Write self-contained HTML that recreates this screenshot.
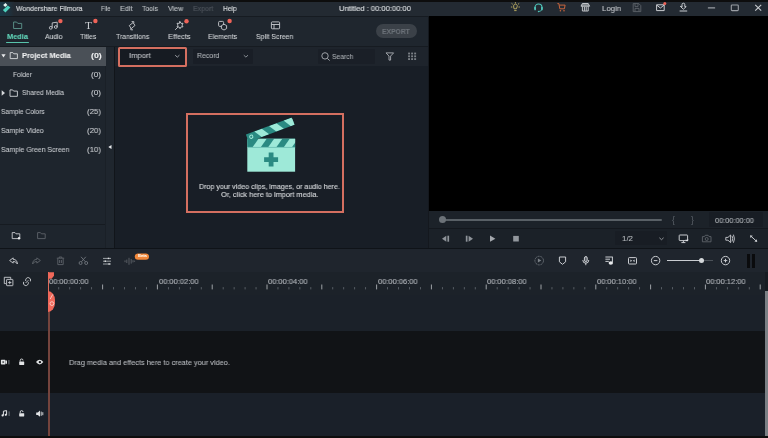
<!DOCTYPE html>
<html lang="en"><head><meta charset="utf-8"><title>Wondershare Filmora</title>
<style>
html,body{margin:0;padding:0;background:#0d0d0d;}
body{width:768px;height:438px;position:relative;overflow:hidden;font-family:"Liberation Sans",sans-serif;}
.b{position:absolute;}
.t{position:absolute;white-space:nowrap;line-height:1;will-change:transform;transform-origin:0 50%;-webkit-text-stroke:0.08px currentColor;}
svg{position:absolute;left:0;top:0;overflow:visible;}
</style></head><body>
<div class="b" style="left:0px;top:1.8px;width:768px;height:14.7px;background:#232a32;"></div>
<div class="b" style="left:0px;top:16.2px;width:768px;height:1px;background:#161b21;"></div>
<div class="b" style="left:0px;top:17px;width:429px;height:29.5px;background:#1f262e;"></div>
<div class="b" style="left:0px;top:46.2px;width:429px;height:1px;background:#161b21;"></div>
<div class="b" style="left:0px;top:47px;width:114.5px;height:201px;background:#1e252d;"></div>
<div class="b" style="left:0px;top:47px;width:105.5px;height:18.7px;background:#4a5057;"></div>
<div class="b" style="left:105.5px;top:47px;width:8.6px;height:201px;background:#1f262e;"></div>
<div class="b" style="left:113.9px;top:47px;width:1.4px;height:201px;background:#11151a;"></div>
<div class="b" style="left:0px;top:223.6px;width:105.5px;height:0.9px;background:#161b21;"></div>
<div class="b" style="left:105.3px;top:65.7px;width:0.8px;height:182px;background:#1a2027;"></div>
<div class="b" style="left:115px;top:47px;width:314px;height:18.5px;background:#1e242c;"></div>
<div class="b" style="left:115px;top:65.5px;width:314px;height:182.3px;background:#181e26;"></div>
<div class="b" style="left:427.8px;top:17px;width:1.4px;height:231px;background:#14181e;"></div>
<div class="b" style="left:118.4px;top:46.9px;width:68.4px;height:19.7px;background:#161b22;box-sizing:border-box;border:2.1px solid #d46f60;border-radius:1.5px;"></div>
<div class="b" style="left:192.5px;top:49px;width:60.5px;height:14.6px;background:#191e26;border-radius:1px;"></div>
<div class="b" style="left:318px;top:49.2px;width:56.5px;height:14.6px;background:#1a1f27;border-radius:1px;"></div>
<div class="b" style="left:375.8px;top:23.8px;width:41.4px;height:13.8px;background:#3b4148;border-radius:7px;"></div>
<div class="b" style="left:429px;top:16.4px;width:339px;height:194.3px;background:#000000;"></div>
<div class="b" style="left:429px;top:210.7px;width:339px;height:17.3px;background:#1c2229;"></div>
<div class="b" style="left:429px;top:228px;width:339px;height:0.8px;background:#14181e;"></div>
<div class="b" style="left:429px;top:228.8px;width:339px;height:19px;background:#1b2128;"></div>
<div class="b" style="left:0px;top:247.5px;width:768px;height:1.6px;background:#0f1318;"></div>
<div class="b" style="left:443px;top:219.1px;width:218.5px;height:1.7px;background:#596066;border-radius:1px;"></div>
<div class="b" style="left:438.5px;top:216.4px;width:7px;height:7px;background:#6c7278;border-radius:50%;"></div>
<div class="b" style="left:709px;top:212px;width:53.5px;height:15px;background:#181d24;border-radius:1px;"></div>
<div class="b" style="left:615px;top:231.4px;width:52px;height:13.2px;background:#181d24;border-radius:1px;"></div>
<div class="b" style="left:0px;top:249px;width:768px;height:23px;background:#1f252d;"></div>
<div class="b" style="left:0px;top:272px;width:768px;height:23px;background:#1c2229;"></div>
<div class="b" style="left:0px;top:295px;width:768px;height:36px;background:#1b2129;"></div>
<div class="b" style="left:0px;top:331px;width:768px;height:62px;background:#111316;"></div>
<div class="b" style="left:0px;top:393px;width:768px;height:43px;background:#1a2029;"></div>
<div class="b" style="left:0px;top:436px;width:768px;height:2px;background:#0d0d0d;"></div>
<div class="b" style="left:764.6px;top:272px;width:3.4px;height:19px;background:#171c22;"></div>
<div class="b" style="left:764.8px;top:291px;width:3.2px;height:145px;background:#7b8085;"></div>
<div class="b" style="left:747.2px;top:253.8px;width:3.2px;height:13.8px;background:#0a0b0d;"></div>
<div class="b" style="left:751.6px;top:253.8px;width:3.2px;height:13.8px;background:#0a0b0d;"></div>
<div class="b" style="left:667px;top:260.2px;width:35px;height:1.2px;background:#c9ccd0;"></div>
<div class="b" style="left:702px;top:260.4px;width:11px;height:0.8px;background:#4c5259;"></div>
<div class="b" style="left:699px;top:258.2px;width:5px;height:5px;background:#d5d8db;border-radius:50%;"></div>
<div class="b" style="left:185.9px;top:112.8px;width:158.4px;height:100.1px;background:transparent;box-sizing:border-box;border:2.1px solid #d46f60;"></div>
<div class="b" style="left:48.2px;top:295px;width:1.4px;height:141px;background:#75443d;"></div>
<div class="b" style="left:48.2px;top:272px;width:1.2px;height:23px;background:#e06c5c;"></div>
<div class="b" style="left:48.2px;top:272.2px;width:5.8px;height:6.6px;background:#f0685a;clip-path:polygon(0 0,100% 0,100% 55%,60% 100%,0 100%);"></div>
<div class="b" style="left:48.2px;top:291px;width:7px;height:21px;background:#f0685a;border-radius:0 7px 7px 0 / 0 9px 9px 0;"></div>
<div class="b" style="left:6.3px;top:42.1px;width:22.3px;height:1.4px;background:#58c4ab;border-radius:1px;"></div>
<svg width="768" height="438" viewBox="0 0 768 438">
<rect x="58.36" y="287.1" width="0.8" height="2.3" fill="#666c73"/>
<rect x="69.32" y="287.1" width="0.8" height="2.3" fill="#666c73"/>
<rect x="80.28" y="287.1" width="0.8" height="2.3" fill="#666c73"/>
<rect x="91.24" y="287.1" width="0.8" height="2.3" fill="#666c73"/>
<rect x="102.10" y="284.5" width="1" height="4.9" fill="#9da1a6"/>
<rect x="113.16" y="287.1" width="0.8" height="2.3" fill="#666c73"/>
<rect x="124.12" y="287.1" width="0.8" height="2.3" fill="#666c73"/>
<rect x="135.08" y="287.1" width="0.8" height="2.3" fill="#666c73"/>
<rect x="146.04" y="287.1" width="0.8" height="2.3" fill="#666c73"/>
<rect x="156.90" y="284.5" width="1" height="4.9" fill="#9da1a6"/>
<rect x="167.96" y="287.1" width="0.8" height="2.3" fill="#666c73"/>
<rect x="178.92" y="287.1" width="0.8" height="2.3" fill="#666c73"/>
<rect x="189.88" y="287.1" width="0.8" height="2.3" fill="#666c73"/>
<rect x="200.84" y="287.1" width="0.8" height="2.3" fill="#666c73"/>
<rect x="211.70" y="284.5" width="1" height="4.9" fill="#9da1a6"/>
<rect x="222.76" y="287.1" width="0.8" height="2.3" fill="#666c73"/>
<rect x="233.72" y="287.1" width="0.8" height="2.3" fill="#666c73"/>
<rect x="244.68" y="287.1" width="0.8" height="2.3" fill="#666c73"/>
<rect x="255.64" y="287.1" width="0.8" height="2.3" fill="#666c73"/>
<rect x="266.50" y="284.5" width="1" height="4.9" fill="#9da1a6"/>
<rect x="277.56" y="287.1" width="0.8" height="2.3" fill="#666c73"/>
<rect x="288.52" y="287.1" width="0.8" height="2.3" fill="#666c73"/>
<rect x="299.48" y="287.1" width="0.8" height="2.3" fill="#666c73"/>
<rect x="310.44" y="287.1" width="0.8" height="2.3" fill="#666c73"/>
<rect x="321.30" y="284.5" width="1" height="4.9" fill="#9da1a6"/>
<rect x="332.36" y="287.1" width="0.8" height="2.3" fill="#666c73"/>
<rect x="343.32" y="287.1" width="0.8" height="2.3" fill="#666c73"/>
<rect x="354.28" y="287.1" width="0.8" height="2.3" fill="#666c73"/>
<rect x="365.24" y="287.1" width="0.8" height="2.3" fill="#666c73"/>
<rect x="376.10" y="284.5" width="1" height="4.9" fill="#9da1a6"/>
<rect x="387.16" y="287.1" width="0.8" height="2.3" fill="#666c73"/>
<rect x="398.12" y="287.1" width="0.8" height="2.3" fill="#666c73"/>
<rect x="409.08" y="287.1" width="0.8" height="2.3" fill="#666c73"/>
<rect x="420.04" y="287.1" width="0.8" height="2.3" fill="#666c73"/>
<rect x="430.90" y="284.5" width="1" height="4.9" fill="#9da1a6"/>
<rect x="441.96" y="287.1" width="0.8" height="2.3" fill="#666c73"/>
<rect x="452.92" y="287.1" width="0.8" height="2.3" fill="#666c73"/>
<rect x="463.88" y="287.1" width="0.8" height="2.3" fill="#666c73"/>
<rect x="474.84" y="287.1" width="0.8" height="2.3" fill="#666c73"/>
<rect x="485.70" y="284.5" width="1" height="4.9" fill="#9da1a6"/>
<rect x="496.76" y="287.1" width="0.8" height="2.3" fill="#666c73"/>
<rect x="507.72" y="287.1" width="0.8" height="2.3" fill="#666c73"/>
<rect x="518.68" y="287.1" width="0.8" height="2.3" fill="#666c73"/>
<rect x="529.64" y="287.1" width="0.8" height="2.3" fill="#666c73"/>
<rect x="540.50" y="284.5" width="1" height="4.9" fill="#9da1a6"/>
<rect x="551.56" y="287.1" width="0.8" height="2.3" fill="#666c73"/>
<rect x="562.52" y="287.1" width="0.8" height="2.3" fill="#666c73"/>
<rect x="573.48" y="287.1" width="0.8" height="2.3" fill="#666c73"/>
<rect x="584.44" y="287.1" width="0.8" height="2.3" fill="#666c73"/>
<rect x="595.30" y="284.5" width="1" height="4.9" fill="#9da1a6"/>
<rect x="606.36" y="287.1" width="0.8" height="2.3" fill="#666c73"/>
<rect x="617.32" y="287.1" width="0.8" height="2.3" fill="#666c73"/>
<rect x="628.28" y="287.1" width="0.8" height="2.3" fill="#666c73"/>
<rect x="639.24" y="287.1" width="0.8" height="2.3" fill="#666c73"/>
<rect x="650.10" y="284.5" width="1" height="4.9" fill="#9da1a6"/>
<rect x="661.16" y="287.1" width="0.8" height="2.3" fill="#666c73"/>
<rect x="672.12" y="287.1" width="0.8" height="2.3" fill="#666c73"/>
<rect x="683.08" y="287.1" width="0.8" height="2.3" fill="#666c73"/>
<rect x="694.04" y="287.1" width="0.8" height="2.3" fill="#666c73"/>
<rect x="704.90" y="284.5" width="1" height="4.9" fill="#9da1a6"/>
<rect x="715.96" y="287.1" width="0.8" height="2.3" fill="#666c73"/>
<rect x="726.92" y="287.1" width="0.8" height="2.3" fill="#666c73"/>
<rect x="737.88" y="287.1" width="0.8" height="2.3" fill="#666c73"/>
<rect x="748.84" y="287.1" width="0.8" height="2.3" fill="#666c73"/>
<rect x="759.70" y="284.5" width="1" height="4.9" fill="#9da1a6"/>
<defs><linearGradient id="lg" x1="0" y1="0" x2="1" y2="0"><stop offset="0" stop-color="#1c3846"/><stop offset="0.65" stop-color="#1f323e"/><stop offset="1" stop-color="#232a32"/></linearGradient></defs>
<rect x="0" y="1.8" width="14" height="14.2" fill="url(#lg)"/>
<polygon points="3.2,4.9 5.5,2.9 7.4,5 5.2,7" fill="#e4f3f1"/>
<polygon points="7.8,5.5 10.4,7.6 5.4,12.4 2.9,10" fill="#4fd2bf"/>
<path d="M13.6 22 h3 l1.2 1.4 h3.9 v5.1 h-8.1z" fill="none" stroke="#578a83" stroke-width="1" stroke-linejoin="round"/>
<g fill="none" stroke="#c9ccd0" stroke-width="0.9"><circle cx="50.8" cy="27.8" r="1.4"/><circle cx="55.8" cy="27" r="1.4"/><path d="M52.2 27.8 V22.9 L57.2 22.2 V27"/></g>
<g fill="none" stroke="#c9ccd0" stroke-width="0.9" stroke-linejoin="round"><path d="M129.3 25.6 L133 22.6 L135 25.4 L131.3 28.6 Z"/><path d="M131.6 21.6 h2.2 v1.6"/><path d="M133 29.8 h-2.2 v-1.6"/></g>
<g fill="none" stroke="#c9ccd0" stroke-width="0.9" stroke-linejoin="round" stroke-linecap="round"><path d="M180 21.6 l1 1.8 l2 -0.1 l-1 1.8 l1 1.8 l-2 0 l-1 1.8 l-1 -1.8 l-2 0 l1 -1.8 l-1 -1.8 l2 0.1 z"/><path d="M177.6 27.4 L175.4 29.6"/></g>
<g fill="none" stroke="#c9ccd0" stroke-width="0.9" stroke-linejoin="round"><rect x="218.6" y="21.4" width="5" height="5" rx="1"/><path d="M224 24.2 l2.6 1.4 v3 l-2.6 1.4 l-2.6 -1.4 v-3 z" fill="#1f262e"/></g>
<g fill="none" stroke="#c9ccd0" stroke-width="0.9"><rect x="271.4" y="21.9" width="8.2" height="6.9" rx="0.8"/><path d="M271.4 24.5 h8.2 M274 24.5 v4.3"/></g>
<circle cx="60.4" cy="21.1" r="2.2" fill="#ef6358"/>
<circle cx="95.4" cy="21.0" r="2.2" fill="#ef6358"/>
<circle cx="186.5" cy="21.3" r="2.2" fill="#ef6358"/>
<circle cx="229.6" cy="21.0" r="2.2" fill="#ef6358"/>
<g fill="none" stroke="#c2b162" stroke-width="0.9" stroke-linecap="round"><path d="M513.6 6.6 a1.9 1.9 0 1 1 3.6 0 l-0.8 2.2 h-2 z"/><path d="M514.6 10.6 h1.6 M515.4 3 v-0.5 M512.4 4 l-0.5 -0.4 M518.4 4 l0.5 -0.4 M511.9 7 h-0.6 M518.9 7 h0.6"/></g>
<g fill="none" stroke="#4fc6ba" stroke-linecap="round"><path d="M535 8.4 v-0.9 a3.5 3.5 0 0 1 7 0 v0.9" stroke-width="1.1"/><path d="M535.1 7.6 v1.9 M541.9 7.6 v1.9" stroke-width="1.7"/><path d="M541.8 9.8 q-0.3 1.6 -2.8 1.7" stroke-width="0.8"/></g><circle cx="538.6" cy="11.5" r="0.8" fill="#4fc6ba"/>
<g fill="none" stroke="#c8643c" stroke-width="1" stroke-linejoin="round"><path d="M557.4 3.6 h1.5 l0.9 5.2 h4.6 l0.7 -3.7 h-5.7"/></g><circle cx="560.4" cy="10.7" r="0.8" fill="#c8643c"/><circle cx="564" cy="10.7" r="0.8" fill="#c8643c"/>
<g fill="none" stroke="#c9ccd0" stroke-width="0.95" stroke-linejoin="round"><path d="M581 6.2 l1.4 -2.7 h5.8 l1.4 2.7 z" fill="#c9ccd0" fill-opacity="0.55"/><path d="M582.4 6.4 v4.6 h5.8 v-4.6 M584.4 6.8 v4 M586.2 6.8 v4"/></g>
<g fill="none" stroke="#5d636a" stroke-width="0.9" stroke-linejoin="round"><path d="M633.2 3.6 h5.6 l2 2 v6 h-7.6 z"/><path d="M635 3.8 v2.8 h3 v-2.8 M635 11.4 v-3 h4 v3"/></g>
<g fill="none" stroke="#c9ccd0" stroke-width="1" stroke-linejoin="round"><rect x="656.6" y="4.8" width="7.6" height="5.8"/><path d="M656.8 5.2 l3.6 2.8 l3.6 -2.8"/></g>
<circle cx="664.8" cy="3.6" r="1.5" fill="#ef6358"/>
<g fill="none" stroke="#c9ccd0" stroke-width="1" stroke-linejoin="round" stroke-linecap="round"><path d="M682 6.6 v-2 a1.4 1.4 0 0 1 2.8 0 v2 h1.4 l-2.8 2.6 l-2.8 -2.6 z"/><path d="M680 11 h6.8"/></g>
<rect x="707.8" y="7.2" width="7.4" height="1.4" rx="0.5" fill="#9a9ea4"/>
<rect x="731.3" y="5" width="7" height="5.6" rx="0.8" fill="none" stroke="#9a9ea4" stroke-width="1.1"/>
<path d="M755.2 4.8 l6 5.8 M761.2 4.8 l-6 5.8" stroke="#c9ccd0" stroke-width="1.1" fill="none"/>
<polygon points="1.4,54.2 5.6,54.2 3.5,57.4" fill="#e8eaec"/>
<path d="M10.2 52.6 h2.6 l1 1.2 h3.6 v4.8 h-7.2z" fill="none" stroke="#d9dcdf" stroke-width="0.9" stroke-linejoin="round"/>
<polygon points="1.7,90.3 5,93 1.7,95.7" fill="#d4d7da"/>
<path d="M10 89.9 h2.6 l1 1.2 h3.8 v5.2 h-7.4z" fill="none" stroke="#c9ccd0" stroke-width="0.95" stroke-linejoin="round"/>
<polygon points="111.5,145 111.5,149 108.3,147" fill="#e8eaec"/>
<path d="M12.2 232.6 h2.8 l1 1.2 h3.8 v4.8 h-7.6z" fill="none" stroke="#c9ccd0" stroke-width="0.9" stroke-linejoin="round"/><circle cx="19" cy="238.2" r="1.2" fill="#e8eaec"/>
<path d="M37.6 232.6 h2.8 l1 1.2 h3.8 v4.8 h-7.6z" fill="none" stroke="#5d636a" stroke-width="0.9" stroke-linejoin="round"/>
<path d="M175.2 55.2 l2.1 1.9 l2.1 -1.9" fill="none" stroke="#a9adb2" stroke-width="0.9"/>
<path d="M243.8 55.2 l2.1 1.9 l2.1 -1.9" fill="none" stroke="#92979d" stroke-width="0.9"/>
<g fill="none" stroke="#9da1a7" stroke-width="1"><circle cx="325" cy="55.9" r="3.2"/><path d="M327.3 58.4 l2.4 2.2"/></g>
<path d="M386 52.9 h7.6 l-3 3.2 v4 h-1.6 v-4 z" fill="none" stroke="#aaaeb3" stroke-width="0.9" stroke-linejoin="round"/>
<rect x="408.10" y="52.60" width="1.9" height="1.8" fill="#7c8187"/>
<rect x="411.15" y="52.60" width="1.9" height="1.8" fill="#7c8187"/>
<rect x="414.20" y="52.60" width="1.9" height="1.8" fill="#7c8187"/>
<rect x="408.10" y="55.40" width="1.9" height="1.8" fill="#7c8187"/>
<rect x="411.15" y="55.40" width="1.9" height="1.8" fill="#7c8187"/>
<rect x="414.20" y="55.40" width="1.9" height="1.8" fill="#7c8187"/>
<rect x="408.10" y="58.20" width="1.9" height="1.8" fill="#7c8187"/>
<rect x="411.15" y="58.20" width="1.9" height="1.8" fill="#7c8187"/>
<rect x="414.20" y="58.20" width="1.9" height="1.8" fill="#7c8187"/>
<rect x="247.3" y="138.7" width="47.8" height="33" fill="#9ee9d8"/>
<rect x="247.3" y="138.7" width="47.8" height="8.6" fill="#2a8a82"/>
<clipPath id="cs"><rect x="247.3" y="138.7" width="47.8" height="8.3"/></clipPath>
<g clip-path="url(#cs)" fill="#9ee9d8">
<polygon points="252.5,147.29999999999998 258.5,138.7 266.7,138.7 260.7,147.29999999999998"/>
<polygon points="268.1,147.29999999999998 274.1,138.7 282.3,138.7 276.3,147.29999999999998"/>
<polygon points="283.7,147.29999999999998 289.7,138.7 297.9,138.7 291.9,147.29999999999998"/>
</g>
<rect x="247.3" y="146.89999999999998" width="47.8" height="0.8" fill="#74c7b9"/>
<path d="M264.1 157.2 h4.6 v-4.6 h4.8 v4.6 h4.6 v4.8 h-4.6 v4.6 h-4.8 v-4.6 h-4.6z" fill="#2a8a82"/>
<g transform="translate(248.6 141.9) rotate(-20.4)">
<rect x="0" y="-7.8" width="49" height="7.8" fill="#2a8a82"/>
<clipPath id="ca"><rect x="0" y="-7.8" width="49" height="7.8"/></clipPath>
<g clip-path="url(#ca)" fill="#9ee9d8">
<polygon points="9.0,-7.8 17.0,-7.8 22.0,0 14.0,0"/>
<polygon points="24.6,-7.8 32.6,-7.8 37.6,0 29.6,0"/>
<polygon points="40.2,-7.8 48.2,-7.8 53.2,0 45.2,0"/>
</g>
<circle cx="4.3" cy="-3.9" r="1.6" fill="none" stroke="#9ee9d8" stroke-width="1"/>
</g>
<polygon points="446.3,235.7 446.3,241.7 442,238.7" fill="#8e9399"/><rect x="447.4" y="235.7" width="1.7" height="6" fill="#8e9399"/>
<rect x="465.8" y="235.7" width="1.7" height="6" fill="#8e9399"/><polygon points="468.6,235.7 468.6,241.7 473,238.7" fill="#8e9399"/>
<polygon points="490,235.6 490,241.8 495.4,238.7" fill="#a4a8ad"/>
<rect x="513.2" y="235.9" width="5.6" height="5.6" fill="#92979d"/>
<path d="M659.4 237.8 l2.1 1.9 l2.1 -1.9" fill="none" stroke="#9da1a6" stroke-width="0.9"/>
<g fill="none" stroke="#c9ccd0" stroke-width="1"><rect x="679.2" y="235" width="8.4" height="5.6" rx="0.6"/><path d="M681.4 242.6 h4 M683.4 240.6 v2"/></g><polygon points="685.4,239.8 688.8,239.8 687.1,241.6" fill="#e8eaec"/>
<g fill="none" stroke="#5d636a" stroke-width="0.9" stroke-linejoin="round"><path d="M702.4 236.6 h2 l0.9 -1.3 h2.8 l0.9 1.3 h2 v5.2 h-8.6z"/><circle cx="706.7" cy="239" r="1.5"/></g>
<g fill="none" stroke="#c9ccd0" stroke-width="0.9" stroke-linejoin="round" stroke-linecap="round"><path d="M726.2 237.4 h1.8 l2.6 -2.4 v7.6 l-2.6 -2.4 h-1.8z"/><path d="M732.2 236.2 q1.4 2.5 0 5"/><path d="M733.6 235 q2 3.7 0 7.4"/></g>
<g fill="none" stroke="#c9ccd0" stroke-width="1" stroke-linecap="round"><path d="M751.4 236.6 l4.4 4"/></g><polygon points="750,235.3 752.8,235.7 750.4,237.9" fill="#c9ccd0"/><polygon points="757.2,241.9 754.4,241.5 756.8,239.3" fill="#c9ccd0"/>
<path d="M13.2 257.9 l-3.6 2.6 l3.6 2.6 v-1.7 q2.6 -0.2 4.2 2.6 q-0.2 -4.6 -4.2 -4.6z" fill="none" stroke="#c9ccd0" stroke-width="0.9" stroke-linejoin="round"/>
<path d="M36.8 257.9 l3.6 2.6 l-3.6 2.6 v-1.7 q-2.6 -0.2 -4.2 2.6 q0.2 -4.6 4.2 -4.6z" fill="none" stroke="#5d636a" stroke-width="0.9" stroke-linejoin="round"/>
<g fill="none" stroke="#5d636a" stroke-width="0.9"><path d="M56.8 258.2 h7.4 M59.2 258 v-1 h2.6 v1 M57.8 258.4 v6.2 h5.4 v-6.2 M59.6 260 v3 M61.4 260 v3"/></g>
<g fill="none" stroke="#70767d" stroke-width="0.9"><circle cx="80.6" cy="263" r="1.5"/><circle cx="86.2" cy="263" r="1.5"/><path d="M81.5 261.7 L85.8 256.8 M85.3 261.7 L81 256.8"/></g>
<g stroke="#b4b8bc" stroke-width="0.85" fill="none"><path d="M103 258.4 h8 M103 261.2 h8 M103 264 h8"/></g><rect x="107.8" y="257.7" width="1.4" height="1.4" fill="#e0e2e4"/><rect x="104.6" y="260.5" width="1.4" height="1.4" fill="#e0e2e4"/><rect x="108.4" y="263.3" width="1.4" height="1.4" fill="#e0e2e4"/>
<g stroke="#5d636a" stroke-width="0.9" fill="none"><path d="M125 260.4 v1.8 M126.8 259.6 v3.4 M129 257.8 v7 M131.2 259 v4.6 M133 260.2 v2.2 M134.6 260.6 v1.2"/></g>
<rect x="134.8" y="253.4" width="14.2" height="6.4" rx="3.2" fill="#f0873a"/>
<g fill="none" stroke="#6a7077" stroke-width="0.9"><circle cx="539.2" cy="260.6" r="4.3" stroke-dasharray="2.2 0.8"/></g><polygon points="537.9,258.6 537.9,262.6 541.3,260.6" fill="#7a8087"/>
<path d="M559.4 257 h6.2 v4.8 l-3.1 2.5 l-3.1 -2.5z" fill="none" stroke="#c9ccd0" stroke-width="1" stroke-linejoin="round"/>
<g fill="none" stroke="#c9ccd0" stroke-width="1" stroke-linecap="round"><rect x="584.4" y="256.6" width="2.8" height="5" rx="1.4" fill="#c9ccd0" fill-opacity="0.35"/><path d="M582.8 260.4 q0 2.8 3 2.8 q3 0 3 -2.8 M585.8 263.2 v1.6"/></g>
<g fill="none" stroke="#c9ccd0" stroke-width="1"><path d="M605.4 257 h7.4 M605.4 259.2 h4.6 M605.4 261.4 h3.4 M612.4 257 v5.4"/></g><ellipse cx="610.8" cy="263" rx="2.2" ry="1.8" fill="#e8eaec"/>
<g fill="none" stroke="#c9ccd0" stroke-width="1"><rect x="628.5" y="257.6" width="8" height="6.4" rx="0.8"/></g><polygon points="630.4,259.6 632.2,260.8 630.4,262" fill="#c9ccd0"/><polygon points="634.6,259.6 632.8,260.8 634.6,262" fill="#c9ccd0"/>
<g fill="none" stroke="#c9ccd0" stroke-width="1"><circle cx="655.6" cy="260.6" r="4.2"/><path d="M653.8 260.6 h3.6"/><circle cx="725.5" cy="260.6" r="4.2"/><path d="M723.7 260.6 h3.6 M725.5 258.8 v3.6"/></g>
<g fill="none" stroke="#c9ccd0" stroke-width="0.9" stroke-linejoin="round"><path d="M4.3 283.6 v-6.3 h6.4"/><path d="M10.7 277.3 v1.6"/><path d="M4.3 283.6 h1.6"/><rect x="6.6" y="279.4" width="6.3" height="6.3" rx="0.5"/><path d="M8.1 282.55 h3.3 M9.75 280.9 v3.3"/></g>
<g fill="none" stroke="#c9ccd0" stroke-width="0.95" stroke-linecap="round"><path d="M25.6 280.6 a2.5 2.5 0 0 1 3.2 -2.9 a2.5 2.5 0 0 1 1.7 3.3"/><path d="M28.4 282.6 a2.5 2.5 0 0 1 -3.2 2.9 a2.5 2.5 0 0 1 -1.7 -3.3"/><path d="M26 282.6 l2 -2"/></g>
<path d="M50.2 299 l2.6 -4.6 M50 303.6 a1.9 1.9 0 1 0 3.8 0 a1.9 1.9 0 1 0 -3.8 0" fill="none" stroke="#f9cfc8" stroke-width="0.9"/>
<rect x="0.9" y="359.8" width="4.6" height="4.6" rx="0.6" fill="#e2e4e6"/><polygon points="5.5,361 7,360.2 7,364 5.5,363.2" fill="#e2e4e6"/><polygon points="2.6,360.9 2.6,363.3 4.4,362.1" fill="#111316"/>
<rect x="8.4" y="360" width="1" height="4.4" fill="#6d737a"/>
<rect x="19.2" y="361.6" width="5" height="3.3" rx="0.4" fill="#e2e4e6"/><path d="M20.2 361.6 v-1.2 a1.4 1.4 0 0 1 2.8 0" fill="none" stroke="#e2e4e6" stroke-width="0.9"/>
<path d="M36 362.1 q3.65 -4.6 7.3 0 q-3.65 4.6 -7.3 0z" fill="#e2e4e6"/><circle cx="39.9" cy="362.1" r="1.2" fill="#111316"/>
<g fill="none" stroke="#e2e4e6" stroke-width="1"><path d="M3.4 415.4 v-4.2 l3.2 -0.6 v4.2"/></g><circle cx="2.6" cy="415.4" r="1.1" fill="#e2e4e6"/><circle cx="5.8" cy="414.8" r="1.1" fill="#e2e4e6"/>
<rect x="8.6" y="411.4" width="1" height="4.6" fill="#6d737a"/>
<rect x="19.2" y="413.2" width="5" height="3.3" rx="0.4" fill="#e2e4e6"/><path d="M20.2 413.2 v-1.2 a1.4 1.4 0 0 1 2.8 0" fill="none" stroke="#e2e4e6" stroke-width="0.9"/>
<path d="M36.2 412.4 h1.6 l2.2 -1.8 v6.2 l-2.2 -1.8 h-1.6z" fill="#e2e4e6"/><path d="M41.2 411.6 v4.2 M42.8 412.2 v3" stroke="#e2e4e6" stroke-width="0.9" fill="none"/>
</svg>
<div class="t" style="left:15.70px;top:4.54px;font-size:7.9px;font-weight:400;color:#d3d6d9;transform:scaleX(0.8781);-webkit-text-stroke:0.2px currentColor;">Wondershare Filmora</div>
<div class="t" style="left:100.80px;top:4.54px;font-size:7.9px;font-weight:400;color:#bcc0c4;transform:scaleX(0.7391);-webkit-text-stroke:0.12px currentColor;">File</div>
<div class="t" style="left:119.80px;top:4.54px;font-size:7.9px;font-weight:400;color:#bcc0c4;transform:scaleX(0.9258);-webkit-text-stroke:0.12px currentColor;">Edit</div>
<div class="t" style="left:142.40px;top:4.54px;font-size:7.9px;font-weight:400;color:#bcc0c4;transform:scaleX(0.8685);-webkit-text-stroke:0.12px currentColor;">Tools</div>
<div class="t" style="left:167.90px;top:4.54px;font-size:7.9px;font-weight:400;color:#bcc0c4;transform:scaleX(0.9017);-webkit-text-stroke:0.12px currentColor;">View</div>
<div class="t" style="left:193.00px;top:4.54px;font-size:7.9px;font-weight:400;color:#4b5159;transform:scaleX(0.8899);-webkit-text-stroke:0.2px currentColor;">Export</div>
<div class="t" style="left:223.00px;top:4.54px;font-size:7.9px;font-weight:400;color:#d3d6d9;transform:scaleX(0.8500);-webkit-text-stroke:0.2px currentColor;">Help</div>
<div class="t" style="left:338.80px;top:4.54px;font-size:7.9px;font-weight:400;color:#d3d6d9;transform:scaleX(0.9571);-webkit-text-stroke:0.2px currentColor;">Untitled : 00:00:00:00</div>
<div class="t" style="left:601.50px;top:4.54px;font-size:7.9px;font-weight:400;color:#c6c9cd;transform:scaleX(0.9838);-webkit-text-stroke:0.08px currentColor;">Login</div>
<div class="t" style="left:6.90px;top:32.54px;font-size:7.8px;font-weight:700;color:#62d6ba;transform:scaleX(0.9498);">Media</div>
<div class="t" style="left:44.50px;top:32.54px;font-size:7.8px;font-weight:400;color:#d3d6d9;transform:scaleX(0.8821);">Audio</div>
<div class="t" style="left:80.30px;top:32.54px;font-size:7.8px;font-weight:400;color:#d3d6d9;transform:scaleX(0.8886);">Titles</div>
<div class="t" style="left:116.00px;top:32.54px;font-size:7.8px;font-weight:400;color:#d3d6d9;transform:scaleX(0.8799);">Transitions</div>
<div class="t" style="left:168.10px;top:32.54px;font-size:7.8px;font-weight:400;color:#d3d6d9;transform:scaleX(0.9535);">Effects</div>
<div class="t" style="left:208.00px;top:32.54px;font-size:7.8px;font-weight:400;color:#d3d6d9;transform:scaleX(0.8980);">Elements</div>
<div class="t" style="left:256.40px;top:32.54px;font-size:7.8px;font-weight:400;color:#d3d6d9;transform:scaleX(0.8871);">Split Screen</div>
<div class="t" style="left:382.20px;top:27.64px;font-size:7.8px;font-weight:700;color:#6c7279;transform:scaleX(0.8671);">EXPORT</div>
<div class="t" style="left:22.30px;top:51.99px;font-size:7.9px;font-weight:700;color:#f0f1f2;transform:scaleX(0.9471);">Project Media</div>
<div class="t" style="left:90.50px;top:51.99px;font-size:7.9px;font-weight:700;color:#f0f1f2;transform:scaleX(1.1184);">(0)</div>
<div class="t" style="left:12.50px;top:70.69px;font-size:7.9px;font-weight:400;color:#c9ccd0;transform:scaleX(0.8447);">Folder</div>
<div class="t" style="left:91.00px;top:70.69px;font-size:7.9px;font-weight:400;color:#c9ccd0;transform:scaleX(1.0356);">(0)</div>
<div class="t" style="left:22.30px;top:89.39px;font-size:7.9px;font-weight:400;color:#c9ccd0;transform:scaleX(0.8527);">Shared Media</div>
<div class="t" style="left:91.00px;top:89.39px;font-size:7.9px;font-weight:400;color:#c9ccd0;transform:scaleX(1.0356);">(0)</div>
<div class="t" style="left:1.30px;top:108.19px;font-size:7.9px;font-weight:400;color:#c9ccd0;transform:scaleX(0.8444);">Sample Colors</div>
<div class="t" style="left:87.20px;top:108.19px;font-size:7.9px;font-weight:400;color:#c9ccd0;transform:scaleX(0.9824);">(25)</div>
<div class="t" style="left:1.30px;top:126.59px;font-size:7.9px;font-weight:400;color:#c9ccd0;transform:scaleX(0.8714);">Sample Video</div>
<div class="t" style="left:87.20px;top:126.59px;font-size:7.9px;font-weight:400;color:#c9ccd0;transform:scaleX(0.9824);">(20)</div>
<div class="t" style="left:1.30px;top:145.59px;font-size:7.9px;font-weight:400;color:#c9ccd0;transform:scaleX(0.8748);">Sample Green Screen</div>
<div class="t" style="left:87.20px;top:145.59px;font-size:7.9px;font-weight:400;color:#c9ccd0;transform:scaleX(0.9824);">(10)</div>
<div class="t" style="left:128.60px;top:52.19px;font-size:7.9px;font-weight:400;color:#c9ccd0;transform:scaleX(0.9654);">Import</div>
<div class="t" style="left:196.60px;top:52.19px;font-size:7.9px;font-weight:400;color:#b2b6ba;transform:scaleX(0.8806);">Record</div>
<div class="t" style="left:332.30px;top:52.99px;font-size:7.9px;font-weight:400;color:#a9adb2;transform:scaleX(0.8515);">Search</div>
<div class="t" style="left:198.80px;top:182.79px;font-size:7.9px;font-weight:400;color:#d0d3d6;transform:scaleX(0.8999);-webkit-text-stroke:0.15px currentColor;">Drop your video clips, images, or audio here.</div>
<div class="t" style="left:220.80px;top:191.29px;font-size:7.9px;font-weight:400;color:#d0d3d6;transform:scaleX(0.9302);-webkit-text-stroke:0.15px currentColor;">Or, click here to import media.</div>
<div class="t" style="left:671.50px;top:215.70px;font-size:8.5px;font-weight:400;color:#5a6068;">{</div>
<div class="t" style="left:690.50px;top:215.70px;font-size:8.5px;font-weight:400;color:#5a6068;">}</div>
<div class="t" style="left:715.30px;top:216.59px;font-size:7.9px;font-weight:400;color:#b3b7bb;transform:scaleX(0.9331);">00:00:00:00</div>
<div class="t" style="left:621.60px;top:235.29px;font-size:7.9px;font-weight:400;color:#b3b7bb;transform:scaleX(1.0014);">1/2</div>
<div class="t" style="left:49.30px;top:277.54px;font-size:8.0px;font-weight:400;color:#aeb2b7;transform:scaleX(0.9369);-webkit-text-stroke:0.15px currentColor;">00:00:00:00</div>
<div class="t" style="left:158.80px;top:277.54px;font-size:8.0px;font-weight:400;color:#aeb2b7;transform:scaleX(0.9369);-webkit-text-stroke:0.15px currentColor;">00:00:02:00</div>
<div class="t" style="left:268.30px;top:277.54px;font-size:8.0px;font-weight:400;color:#aeb2b7;transform:scaleX(0.9369);-webkit-text-stroke:0.15px currentColor;">00:00:04:00</div>
<div class="t" style="left:377.80px;top:277.54px;font-size:8.0px;font-weight:400;color:#aeb2b7;transform:scaleX(0.9369);-webkit-text-stroke:0.15px currentColor;">00:00:06:00</div>
<div class="t" style="left:487.30px;top:277.54px;font-size:8.0px;font-weight:400;color:#aeb2b7;transform:scaleX(0.9369);-webkit-text-stroke:0.15px currentColor;">00:00:08:00</div>
<div class="t" style="left:596.80px;top:277.54px;font-size:8.0px;font-weight:400;color:#aeb2b7;transform:scaleX(0.9369);-webkit-text-stroke:0.15px currentColor;">00:00:10:00</div>
<div class="t" style="left:706.30px;top:277.54px;font-size:8.0px;font-weight:400;color:#aeb2b7;transform:scaleX(0.9369);-webkit-text-stroke:0.15px currentColor;">00:00:12:00</div>
<div class="t" style="left:69.10px;top:358.79px;font-size:7.9px;font-weight:400;color:#b9bcc0;transform:scaleX(0.9289);">Drag media and effects here to create your video.</div>
<div class="t" style="left:85.00px;top:19.81px;font-size:11.4px;font-weight:400;color:#c9ccd0;font-family:'Liberation Serif',serif;-webkit-text-stroke:0;">T</div>
<div class="t" style="left:137.60px;top:254.86px;font-size:3.6px;font-weight:700;color:#fff3e6;transform:scaleX(1.1287);">Beta</div>
</body></html>
